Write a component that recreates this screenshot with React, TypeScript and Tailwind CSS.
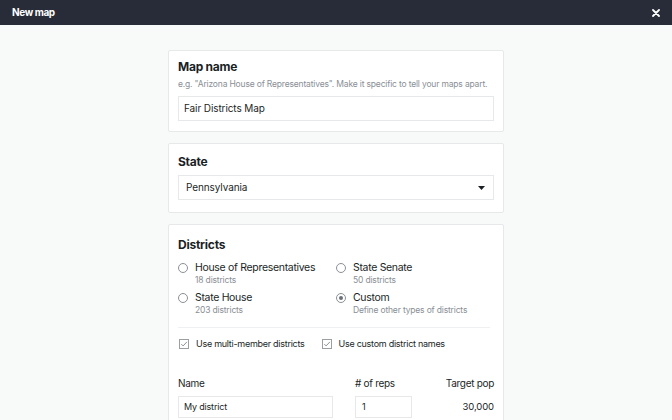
import { useState } from "react";

type DistrictOption = { id: string; label: string; sub: string };

const OPTIONS: DistrictOption[] = [
  { id: "house", label: "House of Representatives", sub: "18 districts" },
  { id: "senate", label: "State Senate", sub: "50 districts" },
  { id: "statehouse", label: "State House", sub: "203 districts" },
  { id: "custom", label: "Custom", sub: "Define other types of districts" },
];

function Radio({ checked }: { checked: boolean }) {
  return (
    <span className="mt-[2px] flex size-[10px] shrink-0 items-center justify-center rounded-full border border-[#8b9098] bg-white">
      {checked && <span className="size-[4px] rounded-full bg-[#6b7079]" />}
    </span>
  );
}

function Checkbox() {
  return (
    <svg width="10" height="10" viewBox="0 0 10 10" className="shrink-0">
      <rect x="0.5" y="0.5" width="9" height="9" fill="white" stroke="#9a9fa6" />
      <path d="M2.3 5.1 L4.1 6.9 L7.9 2.9" fill="none" stroke="#8b9098" strokeWidth="1" />
    </svg>
  );
}

function Card({ className, children }: { className: string; children: React.ReactNode }) {
  return (
    <section className={`rounded-[2px] border border-[#e6e8ea] bg-white px-[9px] ${className}`}>
      {children}
    </section>
  );
}

export default function App() {
  const [selected] = useState("custom");

  return (
    <div className="flex h-[420px] w-[672px] flex-col overflow-hidden bg-[#f8f9f9] font-['Inter',sans-serif] text-[#1b1f26]">
      <header className="flex h-[25px] shrink-0 items-center justify-between bg-[#272c38] pr-[12px] pl-[12px] text-white">
        <span className="text-[10px] font-bold tracking-[-0.04em]">New map</span>
        <svg width="8" height="8" viewBox="0 0 8 8">
          <path d="M1 1 L7 7 M7 1 L1 7" stroke="white" strokeWidth="1.8" strokeLinecap="round" />
        </svg>
      </header>

      <main className="mx-auto flex w-[336px] flex-col gap-[11px] pt-[25px]">
        <Card className="pt-[8px] pb-[10px]">
          <h2 className="text-[12px] leading-[16px] font-bold tracking-[-0.02em]">Map name</h2>
          <p className="mt-[3px] text-[8.5px] leading-[12px] tracking-[-0.02em] text-[#8a8f96]">
            e.g. "Arizona House of Representatives". Make it specific to tell your maps apart.
          </p>
          <div className="mt-[6px] flex h-[25px] items-center border border-[#e6e8ea] px-[5px] text-[10px] tracking-[-0.01em]">
            Fair Districts Map
          </div>
        </Card>

        <Card className="pt-[10px] pb-[12px]">
          <h2 className="text-[12px] leading-[16px] font-bold tracking-[-0.02em]">State</h2>
          <div className="mt-[5px] flex h-[25px] items-center justify-between border border-[#e6e8ea] pr-[8px] pl-[7px] text-[10px] tracking-[-0.01em]">
            <span>Pennsylvania</span>
            <svg width="7" height="4" viewBox="0 0 7 4">
              <path d="M0 0 H7 L3.5 4 Z" fill="#1b1f26" />
            </svg>
          </div>
        </Card>

        <Card className="pt-[12px] pb-[11px]">
          <h2 className="text-[12px] leading-[16px] font-bold tracking-[-0.02em]">Districts</h2>
          <div className="mt-[8px] grid grid-cols-2 gap-y-[5px]">
            {OPTIONS.map((o) => (
              <div key={o.id} className="flex gap-[7px]">
                <Radio checked={selected === o.id} />
                <div className="flex flex-col">
                  <span className="text-[10.5px] leading-[13px] tracking-[-0.03em]">{o.label}</span>
                  <span className="text-[8.5px] leading-[12px] tracking-[-0.02em] text-[#8a8f96]">
                    {o.sub}
                  </span>
                </div>
              </div>
            ))}
          </div>
          <div className="mt-[11px] mr-[4px] h-px bg-[#eef0f1]" />
          <div className="mt-[10px] flex gap-[17px] pl-[1px] text-[9px] leading-[12px] tracking-[-0.03em]">
            <label className="flex items-center gap-[7px]">
              <Checkbox />
              Use multi-member districts
            </label>
            <label className="flex items-center gap-[7px]">
              <Checkbox />
              Use custom district names
            </label>
          </div>

          <div className="mt-[27px] grid grid-cols-[155px_57px_1fr] items-center gap-x-[22px] gap-y-[6px]">
            <span className="text-[10px] leading-[13px] tracking-[-0.03em]">Name</span>
            <span className="text-[10px] leading-[13px] tracking-[-0.03em]"># of reps</span>
            <span className="text-right text-[10px] leading-[13px] tracking-[-0.03em]">Target pop</span>
            <div className="flex h-[22px] items-center border border-[#e6e8ea] px-[5px] text-[9px] tracking-[-0.02em]">
              My district
            </div>
            <div className="flex h-[22px] items-center border border-[#e6e8ea] px-[6px] text-[9px]">
              1
            </div>
            <span className="text-right text-[9.5px] tracking-[-0.01em]">30,000</span>
          </div>
        </Card>
      </main>
    </div>
  );
}
